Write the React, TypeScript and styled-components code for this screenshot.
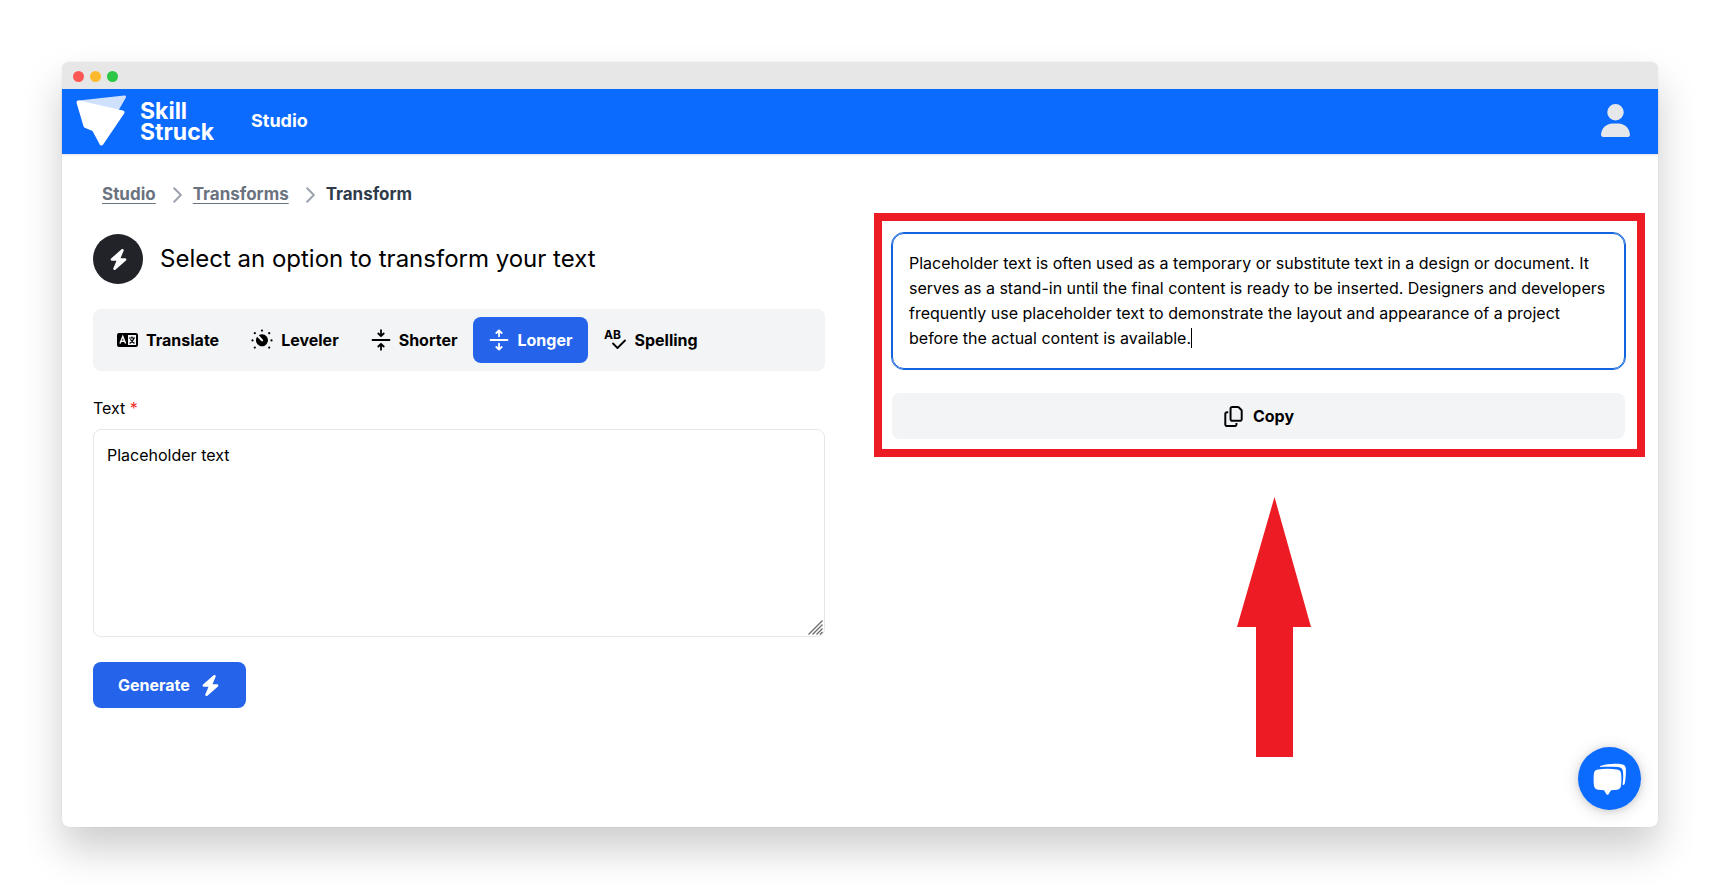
import React, { useLayoutEffect, useRef, useState } from "react";
import styled, { createGlobalStyle, css } from "styled-components";
import { FaBolt, FaRegCopy, FaUser } from "react-icons/fa6";

const GlobalStyle = createGlobalStyle`
  *, *::before, *::after { box-sizing: border-box; }
  body {
    margin: 0;
    background: #fff;
    color: #000;
    font-family: Inter, "Liberation Sans", sans-serif;
    font-size: 16px;
    line-height: 24px;
  }
  button, textarea { font: inherit; color: inherit; }
`;

const Desktop = styled.div`
  display: flex;
  min-height: 100vh;
  padding: 62px;
`;

const BrowserWindow = styled.div`
  position: relative;
  flex: 1;
  min-width: 0;
  background: #fff;
  border-radius: 7px;
  box-shadow: 0 0 1px rgba(0, 0, 0, 0.2), 0 22px 40px rgba(0, 0, 0, 0.2);
`;

const TitleBar = styled.div`
  display: flex;
  align-items: center;
  gap: 6px;
  height: 27px;
  padding: 2px 11px 0;
  background: #e7e7e7;
  border-radius: 7px 7px 0 0;
`;

const Light = styled.span<{ $color: string }>`
  width: 11px;
  height: 11px;
  border-radius: 50%;
  background: ${(p) => p.$color};
`;

const Header = styled.header`
  display: flex;
  align-items: center;
  height: 65px;
  padding: 0 26px 2px 14px;
  background: #0b6bff;
  color: #fff;
  box-shadow: 0 1px 2px rgba(0, 0, 0, 0.12);
`;

const Brand = styled.a`
  display: flex;
  align-items: center;
  gap: 13px;
  color: inherit;
  text-decoration: none;
`;

const BrandName = styled.span`
  width: 75px;
  padding-top: 2px;
  font-size: 23px;
  font-weight: 700;
  line-height: 21px;
`;

const NavLink = styled.a`
  margin-left: 36px;
  font-size: 18px;
  font-weight: 700;
  color: inherit;
  text-decoration: none;
`;

const AccountButton = styled.button`
  display: flex;
  margin-left: auto;
  padding: 0;
  border: 0;
  background: none;
  color: #e5e7eb;
`;

const Breadcrumbs = styled.nav`
  display: flex;
  align-items: center;
  padding: 28px 40px 7px;
  font-size: 17px;
  font-weight: 700;
  color: #2f3b4b;
`;

const Crumb = styled.a`
  color: #6b7280;
  text-underline-offset: 3px;
`;

const CrumbChevron = styled.svg`
  margin: 2px 11px 0 17px;
`;

const Columns = styled.main`
  display: grid;
  grid-template-columns: minmax(0, 732fr) minmax(0, 771fr);
  gap: 49px;
  padding: 0 13px 24px 31px;
`;

const FormColumn = styled.form`
  display: flex;
  flex-direction: column;
  align-items: stretch;
  gap: 25px;
  padding-top: 21px;
`;

const TitleRow = styled.div`
  display: flex;
  align-items: center;
  gap: 17px;
`;

const TitleBadge = styled.span`
  display: grid;
  place-items: center;
  width: 50px;
  height: 50px;
  border-radius: 50%;
  background: #212328;
  color: #fff;
`;

const Title = styled.h1`
  margin: 0;
  font-size: 24px;
  font-weight: 400;
  line-height: 32px;
`;

const Toolbar = styled.div`
  display: flex;
  padding: 8px;
  border-radius: 8px;
  background: #f3f4f6;
`;

const ToolButton = styled.button<{ $active?: boolean }>`
  display: flex;
  align-items: center;
  gap: 8px;
  height: 46px;
  padding: 0 16px;
  border: 0;
  border-radius: 8px;
  background: none;
  font-weight: 700;
  ${(p) =>
    p.$active &&
    css`
      background: #2563eb;
      color: #fff;
    `}
`;

const Field = styled.div`
  display: flex;
  flex-direction: column;
  gap: 9px;
`;

const Required = styled.span`
  color: #ef2b2b;
`;

const TextInputBox = styled.div`
  position: relative;
`;

const TextInput = styled.textarea`
  display: block;
  width: 100%;
  height: 208px;
  padding: 13px;
  border: 1px solid #e5e7eb;
  border-radius: 8px;
  background: #fff;
  outline: 0;
  resize: vertical;
  &::-webkit-resizer { display: none; }
`;

const ResizeGrip = styled.svg`
  position: absolute;
  right: 2px;
  bottom: 2px;
  pointer-events: none;
`;

const GenerateButton = styled.button`
  display: flex;
  align-items: center;
  align-self: flex-start;
  gap: 10px;
  height: 46px;
  padding: 0 25px;
  border: 0;
  border-radius: 8px;
  background: #2563eb;
  color: #fff;
  font-weight: 700;
`;

const ResultColumn = styled.div`
  display: flex;
  flex-direction: column;
  gap: 40px;
`;

const Callout = styled.section`
  display: flex;
  flex-direction: column;
  gap: 24px;
  padding: 12px 12px 10px 10px;
  border: 8px solid #ed1c24;
`;

const OutputBox = styled.div`
  position: relative;
`;

const Output = styled.textarea`
  display: block;
  width: 100%;
  height: 136px;
  padding: 17px 16px;
  border: 1px solid #1263dd;
  border-radius: 12px;
  outline: 1px solid #1263dd;
  background: #fff;
  line-height: 25px;
  overflow: hidden;
  resize: none;
  caret-color: transparent;
`;

const Caret = styled.span`
  position: absolute;
  width: 1px;
  height: 20px;
  background: #000;
`;

const CopyButton = styled.button`
  display: flex;
  align-items: center;
  justify-content: center;
  gap: 9px;
  height: 46px;
  border: 0;
  border-radius: 8px;
  background: #f3f4f6;
  font-weight: 700;
`;

const ArrowHolder = styled.div`
  display: flex;
  justify-content: center;
  padding-left: 28px;
`;

const ChatButton = styled.button`
  position: absolute;
  right: 17px;
  bottom: 17px;
  display: grid;
  place-items: center;
  width: 63px;
  height: 63px;
  padding: 0;
  border: 0;
  border-radius: 50%;
  background: #0b6bff;
  box-shadow: 0 1px 6px rgba(0, 0, 0, 0.1), 0 2px 16px rgba(0, 0, 0, 0.16);
`;

const Logo = () => (
  <svg width="51" height="53" viewBox="0 0 51 53" strokeLinejoin="round" aria-hidden="true">
    <path d="M3 8 L48.500 3 L41 16 L34 18Z" fill="#cfe1ff" stroke="#cfe1ff" strokeWidth="3" />
    <path d="M2.500 8.500 L46.500 18.500 L25.500 49.500 L18 35.500 L9.500 32Z" fill="#fff" stroke="#fff" strokeWidth="4" />
  </svg>
);

const Chevron = () => (
  <CrumbChevron width="9" height="16" viewBox="0 0 9 16" fill="none" aria-hidden="true">
    <path d="M1.200 1.200 L7.800 8 L1.200 14.800" stroke="#9ca3af" strokeWidth="2" strokeLinecap="round" strokeLinejoin="round" />
  </CrumbChevron>
);

const TranslateIcon = () => (
  <svg width="21" height="14" viewBox="0 0 21 14" fill="none" aria-hidden="true">
    <rect width="21" height="14" rx="2" fill="currentColor" />
    <rect x="11" y="2" width="8" height="10" fill="#f3f4f6" />
    <path d="M3 10.500 L5.800 3.500 L8.600 10.500 M4 8.300 H7.600" stroke="#f3f4f6" strokeWidth="1.500" />
    <path d="M12 5 H18 M15 3.400 V5 M17 5 Q16 8.500 12.600 10.400 M13.400 6.300 Q14.800 9 17.500 10.400" stroke="currentColor" strokeWidth="1.200" />
  </svg>
);

const KnobIcon = () => (
  <svg width="22" height="22" viewBox="0 0 22 22" aria-hidden="true">
    <path
      fill="currentColor"
      d="M11 5.300a6 6 0 1 1-4.900 2.500l4.200 4.200a1 1 0 0 0 1.500-1.500L7.800 6.200A6 6 0 0 1 11 5.300Z"
    />
    <g fill="currentColor">
      <circle cx="11" cy="1.600" r="1.100" />
      <circle cx="3.800" cy="4.200" r="1.100" />
      <circle cx="18.200" cy="4.200" r="1.100" />
      <circle cx="1.500" cy="11.400" r="1.100" />
      <circle cx="20.500" cy="11.400" r="1.100" />
      <circle cx="3.800" cy="18.600" r="1.100" />
      <circle cx="18.200" cy="18.600" r="1.100" />
    </g>
  </svg>
);

const LineArrowsIcon = ({ outward = false }: { outward?: boolean }) => (
  <svg
    width="20"
    height="22"
    viewBox="0 0 20 22"
    fill="none"
    stroke="currentColor"
    strokeWidth="1.800"
    strokeLinecap="round"
    strokeLinejoin="round"
    aria-hidden="true"
  >
    <path d="M1.500 11 H18.500" />
    {outward ? (
      <path d="M10 7.300 V1.500 M7.300 4 L10 1.300 L12.700 4 M10 14.700 V20.500 M7.300 18 L10 20.700 L12.700 18" />
    ) : (
      <path d="M10 1.200 V7 M7.300 4.500 L10 7.200 L12.700 4.500 M10 20.800 V15 M7.300 17.500 L10 14.800 L12.700 17.500" />
    )}
  </svg>
);

const SpellIcon = () => (
  <svg width="22" height="22" viewBox="0 0 22 22" fill="none" overflow="visible" aria-hidden="true">
    <text x="0" y="10" fontSize="12" fontWeight="700" fill="currentColor">AB</text>
    <path d="M9 14.500 L13.500 19 L21 11.500" stroke="currentColor" strokeWidth="1.800" strokeLinecap="round" strokeLinejoin="round" />
  </svg>
);

const ChatIcon = () => (
  <svg width="34" height="32" viewBox="0 0 34 32" fill="#fff" aria-hidden="true">
    <path d="M7 3.300 C14 .4 23 .4 28.500 1.200 C31.500 1.600 32.800 3.200 32.900 6 C33 12 32.600 16 31.800 20.500 Q31.400 22 29.500 22 C30.200 17 30.400 13 30 9 C29.700 5.800 28 4.400 25 4.100 C19 3.500 13 3.500 7 4Z" />
    <path d="M5 6.400 C11 5.600 18 5.600 24 6.400 C26.600 6.800 27.800 8.200 28.100 10.600 C28.500 14.500 28.500 18 28.100 22 C27.800 25 26.600 26.400 24 26.700 Q21 27.100 18 27.200 L15.400 31.400 Q14.500 32.300 13.600 31.400 L11 27.200 Q8 27.100 5 26.700 C2.400 26.400 1.200 25 .9 22 C.5 18 .5 14.500 .9 10.600 C1.200 8.200 2.400 6.800 5 6.400Z" />
  </svg>
);

const TOOLS = [
  { label: "Translate", icon: <TranslateIcon /> },
  { label: "Leveler", icon: <KnobIcon /> },
  { label: "Shorter", icon: <LineArrowsIcon /> },
  { label: "Longer", icon: <LineArrowsIcon outward /> },
  { label: "Spelling", icon: <SpellIcon /> },
];

const RESULT =
  "Placeholder text is often used as a temporary or substitute text in a design or document. It serves as a stand-in until the final content is ready to be inserted. Designers and developers frequently use placeholder text to demonstrate the layout and appearance of a project before the actual content is available.";

/* Wraps the text as the field does, to find where its last line ends. */
function findTextEnd(field: HTMLTextAreaElement) {
  const style = getComputedStyle(field);
  const context = document.createElement("canvas").getContext("2d")!;
  context.font = `${style.fontSize} ${style.fontFamily}`;
  const room = field.clientWidth - 2 * parseFloat(style.paddingLeft);
  let line = "";
  let row = 0;
  for (const word of field.value.split(" ")) {
    const next = line ? `${line} ${word}` : word;
    if (line && context.measureText(next).width > room) {
      line = word;
      row += 1;
    } else {
      line = next;
    }
  }
  return {
    left: parseFloat(style.paddingLeft) + 1 + Math.round(context.measureText(line).width),
    top: parseFloat(style.paddingTop) + 3 + row * parseFloat(style.lineHeight),
  };
}

function ResultField() {
  const field = useRef<HTMLTextAreaElement>(null);
  const [value, setValue] = useState(RESULT);
  const [caret, setCaret] = useState({ left: 0, top: 0 });

  useLayoutEffect(() => {
    const update = () => field.current && setCaret(findTextEnd(field.current));
    update();
    window.addEventListener("resize", update);
    return () => window.removeEventListener("resize", update);
  }, [value]);

  return (
    <OutputBox>
      <Output
        ref={field}
        aria-label="Transformed text"
        spellCheck={false}
        value={value}
        onChange={(e) => setValue(e.target.value)}
      />
      <Caret style={caret} />
    </OutputBox>
  );
}

export default function App() {
  const [tool, setTool] = useState("Longer");

  return (
    <>
      <GlobalStyle />
      <Desktop>
        <BrowserWindow>
          <TitleBar>
            <Light $color="#fc5753" />
            <Light $color="#fdb92e" />
            <Light $color="#2dc645" />
          </TitleBar>
          <Header>
            <Brand href="#">
              <Logo />
              <BrandName>Skill Struck</BrandName>
            </Brand>
            <NavLink href="#studio">Studio</NavLink>
            <AccountButton type="button" aria-label="Account">
              <FaUser size={33} />
            </AccountButton>
          </Header>
          <Breadcrumbs aria-label="Breadcrumb">
            <Crumb href="#studio">Studio</Crumb>
            <Chevron />
            <Crumb href="#transforms">Transforms</Crumb>
            <Chevron />
            <span aria-current="page">Transform</span>
          </Breadcrumbs>
          <Columns>
            <FormColumn onSubmit={(e) => e.preventDefault()}>
              <TitleRow>
                <TitleBadge>
                  <FaBolt size={21} />
                </TitleBadge>
                <Title>Select an option to transform your text</Title>
              </TitleRow>
              <Toolbar>
                {TOOLS.map(({ label, icon }) => (
                  <ToolButton
                    key={label}
                    type="button"
                    $active={tool === label}
                    aria-pressed={tool === label}
                    onClick={() => setTool(label)}
                  >
                    {icon}
                    {label}
                  </ToolButton>
                ))}
              </Toolbar>
              <Field>
                <label htmlFor="source-text">
                  Text <Required>*</Required>
                </label>
                <TextInputBox>
                  <TextInput id="source-text" defaultValue="Placeholder text" spellCheck={false} required />
                  <ResizeGrip width="15" height="15" viewBox="0 0 15 15" stroke="#6b6b6b" strokeWidth="1.300" aria-hidden="true">
                    <path d="M.5 14.500 L14.500 .5 M4.500 14.500 L14.500 4.500 M8.500 14.500 L14.500 8.500 M12 14.500 L14.500 12" />
                  </ResizeGrip>
                </TextInputBox>
              </Field>
              <GenerateButton type="submit">
                Generate
                <FaBolt size={21} />
              </GenerateButton>
            </FormColumn>
            <ResultColumn>
              <Callout>
                <ResultField />
                <CopyButton type="button">
                  <FaRegCopy size={21} />
                  Copy
                </CopyButton>
              </Callout>
              <ArrowHolder>
                <svg width="74" height="260" viewBox="0 0 74 260" fill="#ed1c24" aria-hidden="true">
                  <path d="M37.500 0 L74 130 H56 V260 H19 V130 H0Z" />
                </svg>
              </ArrowHolder>
            </ResultColumn>
          </Columns>
          <ChatButton type="button" aria-label="Open chat">
            <ChatIcon />
          </ChatButton>
        </BrowserWindow>
      </Desktop>
    </>
  );
}
